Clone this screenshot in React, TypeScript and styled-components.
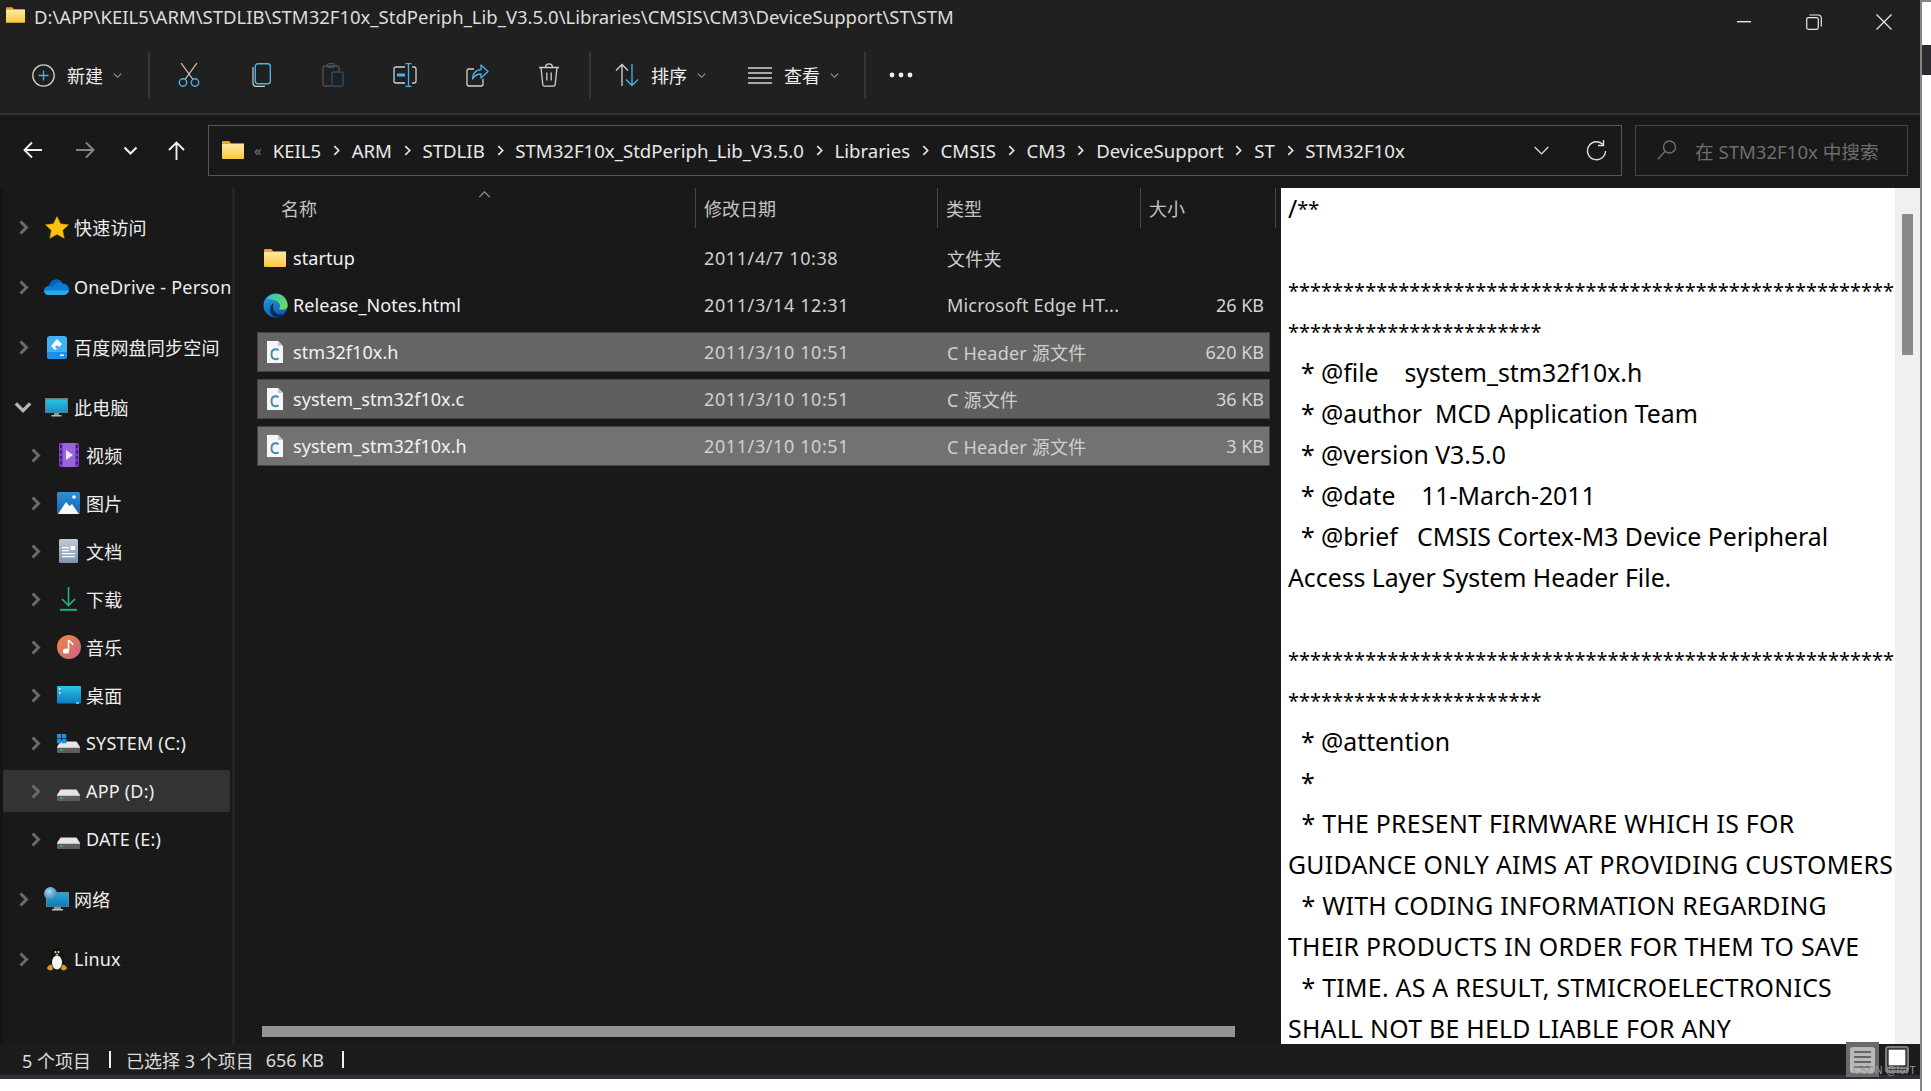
import React from 'react';
import styled, { createGlobalStyle } from 'styled-components';

const GlobalStyle = createGlobalStyle`
  html, body {
    margin: 0;
    padding: 0;
    background: #ffffff;
    overflow: hidden;
  }
  body {
    font-family: "Noto Sans", "Noto Sans CJK SC", sans-serif;
  }
`;

const UI_FONT = `"Noto Sans", "Noto Sans CJK SC", sans-serif`;

const Page = styled.div`
  display: flex;
  align-items: flex-start;
  width: 1931px;
  height: 1091px;
  overflow: hidden;
  background: #ffffff;
`;

const Win = styled.div`
  display: flex;
  flex-direction: column;
  flex: none;
  width: 1920px;
  height: 1079px;
  background: #191919;
  color: #eeeeee;
  font-family: ${UI_FONT};
`;

const RightEdge = styled.div`
  flex: none;
  width: 11px;
  height: 1091px;
  box-sizing: border-box;
  border-left: 2px solid #858585;
  border-top: 2px solid #858585;
  padding-top: 43px;
`;

const EdgeBlock = styled.div`
  height: 30px;
  background: #2a2b30;
`;

const Chrome = styled.div`
  flex: none;
  background: #202020;
  border-bottom: 2px solid #333333;
`;

const TitleBar = styled.div`
  display: flex;
  align-items: flex-start;
  height: 43px;
  padding-left: 6px;
`;

const TitleIcon = styled.div`
  display: flex;
  margin-top: 7px;
`;

const TitleText = styled.div`
  margin-left: 9px;
  font-size: 18.5px;
  line-height: 33px;
  color: #dddddd;
  white-space: nowrap;
`;

const WinButtons = styled.div`
  display: flex;
  margin-left: auto;
  padding-right: 1px;
`;

const WinButton = styled.div`
  display: flex;
  align-items: center;
  justify-content: center;
  width: 70px;
  height: 43px;
`;

const Toolbar = styled.div`
  display: flex;
  align-items: center;
  box-sizing: border-box;
  height: 70px;
  padding: 0 0 6px 32px;
`;

const ToolSep = styled.div<{ $before: number; $after: number }>`
  flex: none;
  width: 2px;
  height: 47px;
  margin: 0 ${p => p.$after}px 0 ${p => p.$before}px;
  background: #353535;
`;

const ToolLabelled = styled.div<{ $gapAfter?: number }>`
  display: flex;
  align-items: center;
  margin-right: ${p => p.$gapAfter || 0}px;
  font-size: 18px;
  color: #eeeeee;
`;

const ToolLabel = styled.span`
  margin: 0 10px 0 12px;
`;

const ToolIcon = styled.div`
  display: flex;
  align-items: center;
  justify-content: center;
  width: 72px;
`;

const NavBar = styled.div`
  display: flex;
  align-items: center;
  flex: none;
  box-sizing: border-box;
  height: 73px;
  padding: 0 0 3px 23px;
  background: #191919;
`;

const NavButton = styled.div<{ $after: number }>`
  display: flex;
  margin-right: ${p => p.$after}px;
`;

const AddressBox = styled.div`
  display: flex;
  align-items: center;
  flex: none;
  box-sizing: border-box;
  width: 1414px;
  height: 51px;
  padding: 0 14px 0 13px;
  border: 1px solid #575757;
  font-size: 18.6px;
  color: #e8e8e8;
`;

const BackCrumbs = styled.span`
  margin: 0 11px 0 10px;
  font-size: 15px;
  color: #777777;
`;

const Crumb = styled.span`
  white-space: nowrap;
`;

const CrumbSep = styled.span`
  display: flex;
  align-items: center;
  justify-content: center;
  width: 30.5px;
`;

const AddressTools = styled.div`
  display: flex;
  align-items: center;
  gap: 36px;
  margin-left: auto;
`;

const SearchBox = styled.div`
  display: flex;
  align-items: center;
  flex: none;
  box-sizing: border-box;
  width: 273px;
  height: 51px;
  margin-left: 13px;
  padding-left: 21px;
  border: 1px solid #454545;
  font-size: 18.6px;
  color: #6e6e6e;
`;

const SearchHint = styled.span`
  margin-left: 18px;
  white-space: nowrap;
`;

const Body = styled.div`
  display: flex;
  flex: 1;
  min-height: 0;
`;

const Sidebar = styled.div`
  flex: none;
  box-sizing: border-box;
  width: 232px;
  padding-right: 2px;
  border-left: 3px solid #141414;
  overflow: hidden;
`;

const TreeRow = styled.div<{ $depth: number; $top?: boolean; $active?: boolean }>`
  display: flex;
  align-items: center;
  height: 42px;
  margin-top: ${p => (p.$top ? 18 : 6)}px;
  padding-left: ${p => 10 + p.$depth * 12}px;
  background: ${p => (p.$active ? '#333333' : 'transparent')};
  border-radius: 2px;
  font-size: 18px;
  letter-spacing: 0.2px;
  white-space: nowrap;
`;

const TreeArrow = styled.div`
  display: flex;
  align-items: center;
  justify-content: center;
  flex: none;
  width: 20px;
  margin-right: 11px;
`;

const TreeIcon = styled.div`
  display: flex;
  align-items: center;
  justify-content: center;
  flex: none;
  width: 25px;
  margin-right: 5px;
`;

const Splitter = styled.div`
  flex: none;
  width: 3px;
  background: #252525;
`;

const FilePane = styled.div`
  display: flex;
  flex-direction: column;
  flex: none;
  width: 1041px;
`;

const ColumnHeader = styled.div`
  display: grid;
  grid-template-columns: 460px 242px 203px 136px;
  flex: none;
  height: 40px;
  font-size: 18px;
  color: #c4c4c4;
`;

const ColumnCell = styled.div<{ $first?: boolean; $last?: boolean }>`
  position: relative;
  display: flex;
  align-items: center;
  box-sizing: border-box;
  padding-left: ${p => (p.$first ? 46 : 8)}px;
  border-left: ${p => (p.$first ? 'none' : '1px solid #454545')};
  border-right: ${p => (p.$last ? '1px solid #454545' : 'none')};
`;

const SortCaret = styled.div`
  position: absolute;
  top: 0;
  left: 243px;
  display: flex;
`;

const FileList = styled.div`
  display: flex;
  flex-direction: column;
  flex: 1;
  gap: 7px;
  padding: 10px 6px 0 22px;
`;

const FileRow = styled.div<{ $shade?: string }>`
  display: grid;
  grid-template-columns: 446px 243px 193px 1fr;
  align-items: center;
  flex: none;
  box-sizing: border-box;
  height: 40px;
  border: 1px solid ${p => (p.$shade ? '#444444' : 'transparent')};
  background: ${p => p.$shade || 'transparent'};
  font-size: 18px;
`;

const NameCell = styled.div`
  display: flex;
  align-items: center;
  padding-left: 4px;
  letter-spacing: 0.06px;
  color: #f2f2f2;
  white-space: nowrap;
`;

const FileIconBox = styled.div`
  display: flex;
  align-items: center;
  justify-content: center;
  flex: none;
  width: 26px;
  margin-right: 5px;
`;

const DateCell = styled.div`
  letter-spacing: 0.6px;
  color: #d0d0d0;
  white-space: nowrap;
`;

const TypeCell = styled.div`
  letter-spacing: 0.2px;
  color: #d0d0d0;
  white-space: nowrap;
`;

const SizeCell = styled.div`
  padding-right: 5px;
  text-align: right;
  color: #d4d4d4;
`;

const HScroll = styled.div`
  flex: none;
  width: 973px;
  height: 11px;
  margin: 0 0 7px 27px;
  background: #949494;
`;

const Preview = styled.div`
  display: flex;
  flex: none;
  width: 639px;
  background: #ffffff;
  border-left: 5px solid #1a1a1a;
  overflow: hidden;
`;

const PreviewText = styled.div`
  flex: 1;
  min-width: 0;
  padding-left: 7px;
  font-family: ${UI_FONT};
  font-size: 24.8px;
  line-height: 41px;
  color: #000000;
  overflow: hidden;
`;

const PreviewLine = styled.div<{ $caps?: boolean }>`
  height: 41px;
  white-space: pre;
  letter-spacing: ${p => (p.$caps ? '0.3px' : '0')};
`;

const Stars = styled.span`
  font-size: 20px;
  line-height: 1;
  vertical-align: 2px;
`;

const VScroll = styled.div`
  flex: none;
  width: 25px;
  box-sizing: border-box;
  padding: 26px 7px 0 7px;
  background: #f0f0f0;
`;

const VThumb = styled.div`
  height: 141px;
  background: #8a8a8a;
`;

const StatusBar = styled.div`
  display: flex;
  align-items: center;
  flex: none;
  height: 31px;
  padding-left: 22px;
  background: #1c1c1c;
  border-bottom: 4px solid #2c3140;
  font-size: 18px;
  color: #dcdcdc;
`;

const StatusPipe = styled.span`
  flex: none;
  width: 2px;
  height: 17px;
  margin: 0 15px 0 18px;
  background: #f0f0f0;
`;

const StatusGap = styled.span`
  width: 12px;
`;

const ViewSwitch = styled.div`
  position: relative;
  display: flex;
  align-items: center;
  align-self: stretch;
  margin-left: auto;
  padding-right: 5px;
`;

const ViewButton = styled.div<{ $on?: boolean }>`
  display: flex;
  align-items: center;
  justify-content: center;
  width: ${p => (p.$on ? 33 : 30)}px;
  height: 35px;
  margin-right: 3px;
  background: ${p => (p.$on ? '#6a6a6a' : 'transparent')};
`;

const Watermark = styled.span`
  position: absolute;
  right: 4px;
  bottom: -1px;
  font-family: "Liberation Sans", sans-serif;
  font-size: 10px;
  line-height: 11px;
  letter-spacing: 0.4px;
  color: #9a9a9a;
`;

const ACCENT = '#4cb0ec';

const Chevron = ({ dir = 'right', size = 10, color = '#6a6a6a', w = 2.4 }: { dir?: 'right' | 'down' | 'up'; size?: number; color?: string; w?: number }) => {
  const d = dir === 'right' ? 'M3 1l4 4-4 4' : dir === 'down' ? 'M1 3l4 4 4-4' : 'M1 7l4-4 4 4';
  return (
    <svg width={size} height={size} viewBox="0 0 10 10" fill="none">
      <path d={d} stroke={color} strokeWidth={w} />
    </svg>
  );
};

const FolderIcon = ({ w = 22, h = 18 }: { w?: number; h?: number }) => (
  <svg width={w} height={h} viewBox="0 0 22 18">
    <defs>
      <linearGradient id="folderBody" x1="0" y1="0" x2="0" y2="1">
        <stop offset="0" stopColor="#ffe9a6" />
        <stop offset="1" stopColor="#fbc83e" />
      </linearGradient>
    </defs>
    <path d="M0 1.2C0 .5.5 0 1.2 0h6l2 2.2H22V6H0z" fill="#e9a620" />
    <rect x="0" y="3" width="22" height="15" rx="1" fill="url(#folderBody)" />
  </svg>
);

const EdgeIcon = () => (
  <svg width="25" height="25" viewBox="0 0 25 25">
    <defs>
      <linearGradient id="edgeBlue" x1="0" y1="0" x2="0.4" y2="1">
        <stop offset="0" stopColor="#2aa5e4" />
        <stop offset="1" stopColor="#0b5fb0" />
      </linearGradient>
      <linearGradient id="edgeGreen" x1="0" y1="0" x2="1" y2="1">
        <stop offset="0" stopColor="#2ec4c4" />
        <stop offset="1" stopColor="#7fdc4d" />
      </linearGradient>
    </defs>
    <circle cx="12.5" cy="12.5" r="12" fill="url(#edgeBlue)" />
    <path d="M4 6C7 .5 16-1.500 21.500 4.500c3 3.200 3.500 7 3 9.500-1 2.800-5.500 3.200-8.500 2 1.500-1.500 1.500-5-1-7C11.500 6.300 6.500 6.200 4 6z" fill="url(#edgeGreen)" />
    <path d="M10 14c0 4 3.500 7.500 8 7.500 2.500 0 4.500-1 6-3-1.500 4-6 6.500-10.500 6C9 24 6.500 19 7.500 14.500c.5-2 1.500-3.500 3.500-4.500-.8 1-1 2.500-1 4z" fill="#0a2a55" />
  </svg>
);

const CFileIcon = () => (
  <svg width="18" height="22" viewBox="0 0 18 22">
    <path d="M1 0h11l5 5v17H1z" fill="#f4f6f7" />
    <path d="M12 0l5 5h-5z" fill="#c4ccd0" />
    <path d="M12.500 9.300C11.700 8.600 10.800 8.300 9.800 8.300c-2.600 0-4.300 2-4.300 5s1.700 5 4.300 5c1 0 1.900-.3 2.700-1" fill="none" stroke="#3d8fa8" strokeWidth="1.900" />
  </svg>
);

const StarIcon = () => (
  <svg width="24" height="23" viewBox="0 0 24 23">
    <path d="M12 .5l3.500 7.300 8 1-5.900 5.500 1.600 8L12 18.300l-7.200 4 1.600-8L.5 8.800l8-1z" fill="#ffc20e" stroke="#eaa400" strokeWidth=".5" />
  </svg>
);

const OneDriveIcon = () => (
  <svg width="25" height="16" viewBox="0 0 25 16">
    <path d="M5 7c1-4 4-7 8-6.500 2.500.2 4.500 1.700 5.500 4C22 4.500 25 7 25 10.500 25 14 22 16 19 16H5C2 16 0 14 0 11.500S2.500 7 5 7z" fill="#0f7bd6" />
    <path d="M0 11.500C0 14 2 16 5 16h14c3 0 5.500-1.700 6-4.500H0z" fill="#28a8ea" />
    <path d="M5 7c1-4 4-7 8-6.500 2 .2 3.500 1 4.500 2.500C13 3 9 6 8 8 7 7.300 6 7 5 7z" fill="#0364b8" />
  </svg>
);

const BaiduIcon = () => (
  <svg width="20" height="23" viewBox="0 0 20 23">
    <rect x="0" y="0" width="20" height="23" rx="3" fill="#3fb1f5" />
    <path d="M0 16h20v4a3 3 0 0 1-3 3H3a3 3 0 0 1-3-3z" fill="#1e8fe6" />
    <path d="M10 3l5 5-3 3-2-2-2 2 2 2-2 1-4-4z" fill="#ffffff" />
    <rect x="13" y="18.500" width="4" height="1.500" fill="#ffffff" />
  </svg>
);

const MonitorIcon = () => (
  <svg width="23" height="19" viewBox="0 0 23 19">
    <defs>
      <linearGradient id="monScreen" x1="0" y1="0" x2="0" y2="1">
        <stop offset="0" stopColor="#28c4dc" />
        <stop offset="1" stopColor="#1a8fc8" />
      </linearGradient>
    </defs>
    <rect x="0" y="0" width="23" height="15" fill="#6d7b80" />
    <rect x="1" y="1.500" width="21" height="13" fill="url(#monScreen)" />
    <rect x="9" y="15" width="5" height="2" fill="#8a9296" />
    <rect x="6.500" y="17" width="10" height="1.500" fill="#b3b9bc" />
  </svg>
);

const VideoIcon = () => (
  <svg width="20" height="24" viewBox="0 0 20 24">
    <rect x="0" y="0" width="20" height="24" rx="2" fill="#7b44c8" />
    <rect x="4" y="0" width="12" height="24" fill="#9b62e0" />
    {[2, 7.500, 13, 18.500].map(y => (
      <g key={y}>
        <rect x="1" y={y} width="2" height="3" fill="#3c1e70" />
        <rect x="17" y={y} width="2" height="3" fill="#3c1e70" />
      </g>
    ))}
    <path d="M7 7l7 5-7 5z" fill="#f1e9fb" />
  </svg>
);

const PictureIcon = () => (
  <svg width="23" height="22" viewBox="0 0 23 22">
    <defs>
      <linearGradient id="picSky" x1="0" y1="0" x2="0" y2="1">
        <stop offset="0" stopColor="#2f8fd8" />
        <stop offset="1" stopColor="#1464a8" />
      </linearGradient>
    </defs>
    <rect x="0" y="0" width="23" height="22" rx="1.500" fill="url(#picSky)" />
    <circle cx="17" cy="5" r="1.800" fill="#ffffff" />
    <path d="M1 22L9 10l3.500 4 2.500-2 7 10z" fill="#f4f8fc" />
  </svg>
);

const DocIcon = () => (
  <svg width="19" height="24" viewBox="0 0 19 24">
    <defs>
      <linearGradient id="docPage" x1="0" y1="0" x2="0" y2="1">
        <stop offset="0" stopColor="#bfcad8" />
        <stop offset="1" stopColor="#7d94ac" />
      </linearGradient>
    </defs>
    <rect x="0" y="0" width="19" height="24" rx="1.500" fill="url(#docPage)" />
    <rect x="3" y="8" width="7" height="1.300" fill="#ffffff" />
    <rect x="3" y="11" width="7" height="1.300" fill="#ffffff" />
    <rect x="3" y="14" width="13" height="1.300" fill="#ffffff" />
    <rect x="3" y="17" width="13" height="1.300" fill="#ffffff" />
    <rect x="11.500" y="7" width="4.500" height="4" fill="#ffffff" />
  </svg>
);

const DownloadIcon = () => (
  <svg width="17" height="24" viewBox="0 0 17 24" fill="none" stroke="#1db48d" strokeWidth="1.600">
    <path d="M8.500 0v18M2 12l6.500 6.500L15 12" />
    <path d="M0 22.800h17" strokeWidth="1.900" />
  </svg>
);

const MusicIcon = () => (
  <svg width="24" height="24" viewBox="0 0 24 24">
    <defs>
      <linearGradient id="musicBg" x1="0" y1="0" x2="1" y2="1">
        <stop offset="0" stopColor="#f08a3c" />
        <stop offset="1" stopColor="#c85f8e" />
      </linearGradient>
    </defs>
    <circle cx="12" cy="12" r="12" fill="url(#musicBg)" />
    <path d="M11.500 5v10" stroke="#ffffff" strokeWidth="1.600" />
    <path d="M11.500 5c1.500 2.500 4 2.500 4.500 5" stroke="#ffffff" strokeWidth="1.600" fill="none" />
    <ellipse cx="9" cy="16" rx="3.200" ry="2.600" fill="#ffffff" />
  </svg>
);

const DesktopIcon = () => (
  <svg width="24" height="18" viewBox="0 0 24 18">
    <defs>
      <linearGradient id="deskBg" x1="0" y1="0" x2="0" y2="1">
        <stop offset="0" stopColor="#2bc3e0" />
        <stop offset="1" stopColor="#0f79c6" />
      </linearGradient>
    </defs>
    <rect x="0" y="0" width="24" height="17.500" rx="1" fill="url(#deskBg)" />
    <rect x="2" y="2" width="1.500" height="1.500" fill="#ffffff" />
    <rect x="2" y="6" width="1.500" height="1.500" fill="#ffffff" />
    <rect x="19" y="16.500" width="3" height="1" fill="#ffffff" />
  </svg>
);

const DriveIcon = ({ system = false }: { system?: boolean }) => (
  <svg width="23" height="19" viewBox="0 0 23 19">
    <path d="M3.500 7.500h16L23 13v1H0v-1z" fill="#e6e6e6" />
    <rect x="0" y="13" width="23" height="6" rx=".8" fill="#5d5d5d" />
    <rect x="0" y="13" width="23" height="1" fill="#c6c6c6" />
    <rect x="3.500" y="15.500" width="2" height="1.500" fill="#2ed35a" />
    {system && (
      <g fill="#1e90e0">
        <rect x="0" y="0" width="4.300" height="4.300" />
        <rect x="5" y="0" width="4.300" height="4.300" />
        <rect x="0" y="5" width="4.300" height="4.300" />
        <rect x="5" y="5" width="4.300" height="4.300" />
      </g>
    )}
  </svg>
);

const NetworkIcon = () => (
  <svg width="25" height="24" viewBox="0 0 25 24">
    <defs>
      <linearGradient id="netScreen" x1="0" y1="0" x2="0" y2="1">
        <stop offset="0" stopColor="#2aa8d8" />
        <stop offset="1" stopColor="#0f7ab8" />
      </linearGradient>
      <radialGradient id="netGlobe" cx="0.4" cy="0.35" r="0.7">
        <stop offset="0" stopColor="#a8d8f0" />
        <stop offset="1" stopColor="#2f7fb8" />
      </radialGradient>
    </defs>
    <rect x="2" y="5" width="23" height="15" fill="#6d8290" />
    <rect x="3" y="6" width="21" height="13.500" fill="url(#netScreen)" />
    <rect x="10" y="20" width="7" height="2" fill="#8c969c" />
    <rect x="8" y="22" width="11" height="1.500" fill="#bfc5c8" />
    <circle cx="6.500" cy="6.500" r="6.500" fill="url(#netGlobe)" />
  </svg>
);

const TuxIcon = () => (
  <svg width="20" height="25" viewBox="0 0 20 25">
    <ellipse cx="10" cy="12" rx="6.500" ry="11.500" fill="#111111" />
    <ellipse cx="10" cy="15.500" rx="5" ry="7" fill="#f4f4f4" />
    <circle cx="8.500" cy="5" r="1" fill="#eeeeee" />
    <circle cx="11.500" cy="5" r="1" fill="#eeeeee" />
    <path d="M8 6.800h4L10 9z" fill="#e8a92a" />
    <path d="M0 21c1-2 3-4 5-3l1 4c-1 2-5 2-6-1zM20 21c-1-2-3-4-5-3l-1 4c1 2 5 2 6-1z" fill="#d99a1c" />
  </svg>
);

const PlusIcon = () => (
  <svg width="23" height="23" viewBox="0 0 23 23" fill="none">
    <circle cx="11.500" cy="11.500" r="10.700" stroke="#cfcfcf" strokeWidth="1.300" />
    <path d="M11.500 6.500v10M6.500 11.500h10" stroke={ACCENT} strokeWidth="1.300" />
  </svg>
);

const CutIcon = () => (
  <svg width="22" height="24" viewBox="0 0 22 24" fill="none">
    <path d="M3 0l12 16.500M19 0L7 16.500" stroke="#cfcfcf" strokeWidth="1.200" />
    <circle cx="5" cy="19.500" r="3.700" stroke={ACCENT} strokeWidth="1.400" />
    <circle cx="17" cy="19.500" r="3.700" stroke={ACCENT} strokeWidth="1.400" />
  </svg>
);

const CopyIcon = () => (
  <svg width="19" height="24" viewBox="0 0 19 24" fill="none">
    <path d="M1 4v16c0 2 1 3.300 3 3.300h9" stroke="#cfcfcf" strokeWidth="1.200" />
    <rect x="3.300" y=".7" width="15" height="20" rx="2.500" stroke={ACCENT} strokeWidth="1.400" />
  </svg>
);

const PasteIcon = () => (
  <svg width="22" height="24" viewBox="0 0 22 24" fill="none">
    <path d="M9 23H3a2 2 0 0 1-2-2V5a2 2 0 0 1 2-2h12a2 2 0 0 1 2 2v3" stroke="#505050" strokeWidth="1.300" />
    <rect x="5.500" y=".7" width="7" height="3.600" rx="1" stroke="#505050" strokeWidth="1.200" />
    <rect x="10" y="9" width="11" height="14.300" rx="1.800" stroke="#24506e" strokeWidth="1.400" />
  </svg>
);

const RenameIcon = () => (
  <svg width="24" height="24" viewBox="0 0 24 24" fill="none">
    <path d="M12 4H3a2 2 0 0 0-2 2v12a2 2 0 0 0 2 2h9M19 4h2a2 2 0 0 1 2 2v12a2 2 0 0 1-2 2h-2" stroke="#cfcfcf" strokeWidth="1.300" />
    <path d="M15.500 1v22M12.500.7h6M12.500 23.300h6" stroke={ACCENT} strokeWidth="1.300" />
    <rect x="4" y="10.500" width="8" height="3" fill={ACCENT} />
  </svg>
);

const ShareIcon = () => (
  <svg width="23" height="23" viewBox="0 0 23 23" fill="none">
    <path d="M8 5H3a2 2 0 0 0-2 2v13a2 2 0 0 0 2 2h12a2 2 0 0 0 2-2v-5" stroke="#cfcfcf" strokeWidth="1.300" />
    <path d="M15 1l7 6.500-7 6.500v-4c-4 0-6.500 1.500-8.500 5 .3-5.500 3.500-9 8.500-9.500z" stroke={ACCENT} strokeWidth="1.300" strokeLinejoin="round" />
  </svg>
);

const TrashIcon = () => (
  <svg width="22" height="24" viewBox="0 0 22 24" fill="none" stroke="#d0d0d0" strokeWidth="1.300">
    <path d="M1 4.500h20M7.500 4.500C7.500 2 9 .8 11 .8s3.500 1.200 3.500 3.700" />
    <path d="M3 4.500l1.800 17c.1 1 .9 1.700 1.900 1.700h8.600c1 0 1.800-.7 1.900-1.700l1.800-17" />
    <path d="M8.800 9.500v8M13.200 9.500v8" />
  </svg>
);

const SortIcon = () => (
  <svg width="24" height="24" viewBox="0 0 24 24" fill="none">
    <path d="M7 23V1.500M1 7.500l6-6 6 6" stroke="#cfcfcf" strokeWidth="1.300" />
    <path d="M17 1v21.500M11 16.500l6 6 6-6" stroke={ACCENT} strokeWidth="1.300" />
  </svg>
);

const ViewIcon = () => (
  <svg width="24" height="17" viewBox="0 0 24 17" fill="none" stroke="#d4d4d4" strokeWidth="1.300">
    <path d="M0 1h24M0 6h24M0 11h24M0 16h24" />
  </svg>
);

const DotsIcon = () => (
  <svg width="24" height="6" viewBox="0 0 24 6" fill="#f0f0f0">
    <circle cx="3" cy="3" r="2.400" />
    <circle cx="12" cy="3" r="2.400" />
    <circle cx="21" cy="3" r="2.400" />
  </svg>
);

const ArrowIcon = ({ dir, color = '#f0f0f0' }: { dir: 'left' | 'right' | 'up'; color?: string }) => {
  const paths = {
    left: 'M19 9H1.500M9 1.500L1.500 9 9 16.500',
    right: 'M0 9h17.500M10 1.500L17.500 9 10 16.500',
    up: 'M9.500 19V1.500M2 9l7.500-7.500L17 9',
  };
  return (
    <svg width="19" height="19" viewBox="0 0 19 19" fill="none">
      <path d={paths[dir]} stroke={color} strokeWidth="1.900" />
    </svg>
  );
};

const RefreshIcon = () => (
  <svg width="21" height="21" viewBox="0 0 21 21" fill="none" stroke="#e2e2e2" strokeWidth="1.400">
    <path d="M17 4.500A9 9 0 1 0 19.500 11" />
    <path d="M17.500 0v5.500H12" />
  </svg>
);

const SearchIcon = () => (
  <svg width="20" height="20" viewBox="0 0 20 20" fill="none" stroke="#6e6e6e" strokeWidth="1.400">
    <circle cx="12.500" cy="7" r="6" />
    <path d="M8 11.500L.8 19.200" />
  </svg>
);

const MinIcon = () => (
  <svg width="14" height="2" viewBox="0 0 14 2"><rect width="14" height="1.400" fill="#e6e6e6" /></svg>
);

const RestoreIcon = () => (
  <svg width="16" height="16" viewBox="0 0 16 16" fill="none" stroke="#ececec" strokeWidth="1.200">
    <rect x=".7" y="3.700" width="11.600" height="11.600" rx="1.800" />
    <path d="M3.500 1h8.500c2 0 3.300 1.300 3.300 3.300V12.500" />
  </svg>
);

const CloseIcon = () => (
  <svg width="16" height="16" viewBox="0 0 16 16" fill="none" stroke="#ececec" strokeWidth="1.200">
    <path d="M.5.500l15 15M15.500.500l-15 15" />
  </svg>
);

const DetailsViewIcon = () => (
  <svg width="25" height="26" viewBox="0 0 25 26">
    <rect width="25" height="26" rx="3" fill="#b8b8b8" />
    <path d="M4 5h17M4 10h17M4 15h17M4 20h17" stroke="#111111" strokeWidth="1.200" />
  </svg>
);

const PreviewViewIcon = () => (
  <svg width="24" height="27" viewBox="0 0 24 27">
    <rect width="24" height="27" rx="3" fill="#7a7a7a" />
    <rect x="3" y="3" width="18" height="17" fill="#ffffff" stroke="#111111" strokeWidth="1.200" />
    <path d="M3 23.500h18" stroke="#111111" strokeWidth="1" />
  </svg>
);

const crumbs = ['KEIL5', 'ARM', 'STDLIB', 'STM32F10x_StdPeriph_Lib_V3.5.0', 'Libraries', 'CMSIS', 'CM3', 'DeviceSupport', 'ST', 'STM32F10x'];

interface TreeItem {
  label: string;
  depth: number;
  top?: boolean;
  open?: boolean;
  active?: boolean;
  icon: React.ReactNode;
}

const tree: TreeItem[] = [
  { label: '快速访问', depth: 0, top: true, icon: <StarIcon /> },
  { label: 'OneDrive - Person', depth: 0, top: true, icon: <OneDriveIcon /> },
  { label: '百度网盘同步空间', depth: 0, top: true, icon: <BaiduIcon /> },
  { label: '此电脑', depth: 0, top: true, open: true, icon: <MonitorIcon /> },
  { label: '视频', depth: 1, icon: <VideoIcon /> },
  { label: '图片', depth: 1, icon: <PictureIcon /> },
  { label: '文档', depth: 1, icon: <DocIcon /> },
  { label: '下载', depth: 1, icon: <DownloadIcon /> },
  { label: '音乐', depth: 1, icon: <MusicIcon /> },
  { label: '桌面', depth: 1, icon: <DesktopIcon /> },
  { label: 'SYSTEM (C:)', depth: 1, icon: <DriveIcon system /> },
  { label: 'APP (D:)', depth: 1, active: true, icon: <DriveIcon /> },
  { label: 'DATE (E:)', depth: 1, icon: <DriveIcon /> },
  { label: '网络', depth: 0, top: true, icon: <NetworkIcon /> },
  { label: 'Linux', depth: 0, top: true, icon: <TuxIcon /> },
];

const files = [
  { name: 'startup', date: '2011/4/7 10:38', type: '文件夹', size: '', icon: <FolderIcon /> },
  { name: 'Release_Notes.html', date: '2011/3/14 12:31', type: 'Microsoft Edge HT...', size: '26 KB', icon: <EdgeIcon /> },
  { name: 'stm32f10x.h', date: '2011/3/10 10:51', type: 'C Header 源文件', size: '620 KB', shade: '#656565', icon: <CFileIcon /> },
  { name: 'system_stm32f10x.c', date: '2011/3/10 10:51', type: 'C 源文件', size: '36 KB', shade: '#5f5f5f', icon: <CFileIcon /> },
  { name: 'system_stm32f10x.h', date: '2011/3/10 10:51', type: 'C Header 源文件', size: '3 KB', shade: '#727272', icon: <CFileIcon /> },
];

const previewLines: { text: string; stars?: boolean; caps?: boolean }[] = [
  { text: '/' },
  { text: '' },
  { text: '*'.repeat(55), stars: true },
  { text: '*'.repeat(23), stars: true },
  { text: '  * @file    system_stm32f10x.h' },
  { text: '  * @author  MCD Application Team' },
  { text: '  * @version V3.5.0' },
  { text: '  * @date    11-March-2011' },
  { text: '  * @brief   CMSIS Cortex-M3 Device Peripheral' },
  { text: 'Access Layer System Header File.' },
  { text: '' },
  { text: '*'.repeat(55), stars: true },
  { text: '*'.repeat(23), stars: true },
  { text: '  * @attention' },
  { text: '  *' },
  { text: '  * THE PRESENT FIRMWARE WHICH IS FOR', caps: true },
  { text: 'GUIDANCE ONLY AIMS AT PROVIDING CUSTOMERS', caps: true },
  { text: '  * WITH CODING INFORMATION REGARDING', caps: true },
  { text: 'THEIR PRODUCTS IN ORDER FOR THEM TO SAVE', caps: true },
  { text: '  * TIME. AS A RESULT, STMICROELECTRONICS', caps: true },
  { text: 'SHALL NOT BE HELD LIABLE FOR ANY', caps: true },
];

const App: React.FC = () => (
  <Page>
    <GlobalStyle />
    <Win>
      <Chrome>
        <TitleBar>
          <TitleIcon><FolderIcon w={19} h={16} /></TitleIcon>
          <TitleText>D:\APP\KEIL5\ARM\STDLIB\STM32F10x_StdPeriph_Lib_V3.5.0\Libraries\CMSIS\CM3\DeviceSupport\ST\STM</TitleText>
          <WinButtons>
            <WinButton><MinIcon /></WinButton>
            <WinButton><RestoreIcon /></WinButton>
            <WinButton><CloseIcon /></WinButton>
          </WinButtons>
        </TitleBar>
        <Toolbar>
          <ToolLabelled>
            <PlusIcon />
            <ToolLabel>新建</ToolLabel>
            <Chevron dir="down" size={9} color="#9a9a9a" w={1.2} />
          </ToolLabelled>
          <ToolSep $before={26} $after={3} />
          <ToolIcon><CutIcon /></ToolIcon>
          <ToolIcon><CopyIcon /></ToolIcon>
          <ToolIcon><PasteIcon /></ToolIcon>
          <ToolIcon><RenameIcon /></ToolIcon>
          <ToolIcon><ShareIcon /></ToolIcon>
          <ToolIcon><TrashIcon /></ToolIcon>
          <ToolSep $before={4} $after={24} />
          <ToolLabelled $gapAfter={42}>
            <SortIcon />
            <ToolLabel>排序</ToolLabel>
            <Chevron dir="down" size={9} color="#9a9a9a" w={1.2} />
          </ToolLabelled>
          <ToolLabelled>
            <ViewIcon />
            <ToolLabel>查看</ToolLabel>
            <Chevron dir="down" size={9} color="#9a9a9a" w={1.2} />
          </ToolLabelled>
          <ToolSep $before={25} $after={23} />
          <DotsIcon />
        </Toolbar>
      </Chrome>

      <NavBar>
        <NavButton $after={34}><ArrowIcon dir="left" /></NavButton>
        <NavButton $after={28}><ArrowIcon dir="right" color="#858585" /></NavButton>
        <NavButton $after={29}><Chevron dir="down" size={15} color="#efefef" w={1.400} /></NavButton>
        <NavButton $after={22}><ArrowIcon dir="up" /></NavButton>
        <AddressBox>
          <FolderIcon />
          <BackCrumbs>«</BackCrumbs>
          {crumbs.map((c, i) => (
            <React.Fragment key={c}>
              <Crumb>{c}</Crumb>
              {i < crumbs.length - 1 && (
                <CrumbSep><Chevron size={11} color="#e8e8e8" w={1.500} /></CrumbSep>
              )}
            </React.Fragment>
          ))}
          <AddressTools>
            <Chevron dir="down" size={17} color="#dadada" w={0.8} />
            <RefreshIcon />
          </AddressTools>
        </AddressBox>
        <SearchBox>
          <SearchIcon />
          <SearchHint>在 STM32F10x 中搜索</SearchHint>
        </SearchBox>
      </NavBar>

      <Body>
        <Sidebar>
          {tree.map(item => (
            <TreeRow key={item.label} $depth={item.depth} $top={item.top} $active={item.active}>
              <TreeArrow>
                {item.open
                  ? <Chevron dir="down" size={18} color="#b4b4b4" w={1.9} />
                  : <Chevron size={15} w={2} />}
              </TreeArrow>
              <TreeIcon>{item.icon}</TreeIcon>
              <span>{item.label}</span>
            </TreeRow>
          ))}
        </Sidebar>
        <Splitter />
        <FilePane>
          <ColumnHeader>
            <ColumnCell $first>
              名称
              <SortCaret><Chevron dir="up" size={13} color="#9a9a9a" w={0.9} /></SortCaret>
            </ColumnCell>
            <ColumnCell>修改日期</ColumnCell>
            <ColumnCell>类型</ColumnCell>
            <ColumnCell $last>大小</ColumnCell>
          </ColumnHeader>
          <FileList>
            {files.map(f => (
              <FileRow key={f.name} $shade={f.shade}>
                <NameCell>
                  <FileIconBox>{f.icon}</FileIconBox>
                  {f.name}
                </NameCell>
                <DateCell>{f.date}</DateCell>
                <TypeCell>{f.type}</TypeCell>
                <SizeCell>{f.size}</SizeCell>
              </FileRow>
            ))}
          </FileList>
          <HScroll />
        </FilePane>
        <Preview>
          <PreviewText>
            {previewLines.map((l, i) => (
              <PreviewLine key={i} $caps={l.caps}>
                {l.stars ? <Stars>{l.text}</Stars> : l.text}
                {i === 0 && <Stars>**</Stars>}
              </PreviewLine>
            ))}
          </PreviewText>
          <VScroll><VThumb /></VScroll>
        </Preview>
      </Body>

      <StatusBar>
        <span>5 个项目</span>
        <StatusPipe />
        <span>已选择 3 个项目</span>
        <StatusGap />
        <span>656 KB</span>
        <StatusPipe />
        <ViewSwitch>
          <ViewButton $on><DetailsViewIcon /></ViewButton>
          <ViewButton><PreviewViewIcon /></ViewButton>
          <Watermark>CSDN @IorT</Watermark>
        </ViewSwitch>
      </StatusBar>
    </Win>
    <RightEdge>
      <EdgeBlock />
    </RightEdge>
  </Page>
);

export default App;
